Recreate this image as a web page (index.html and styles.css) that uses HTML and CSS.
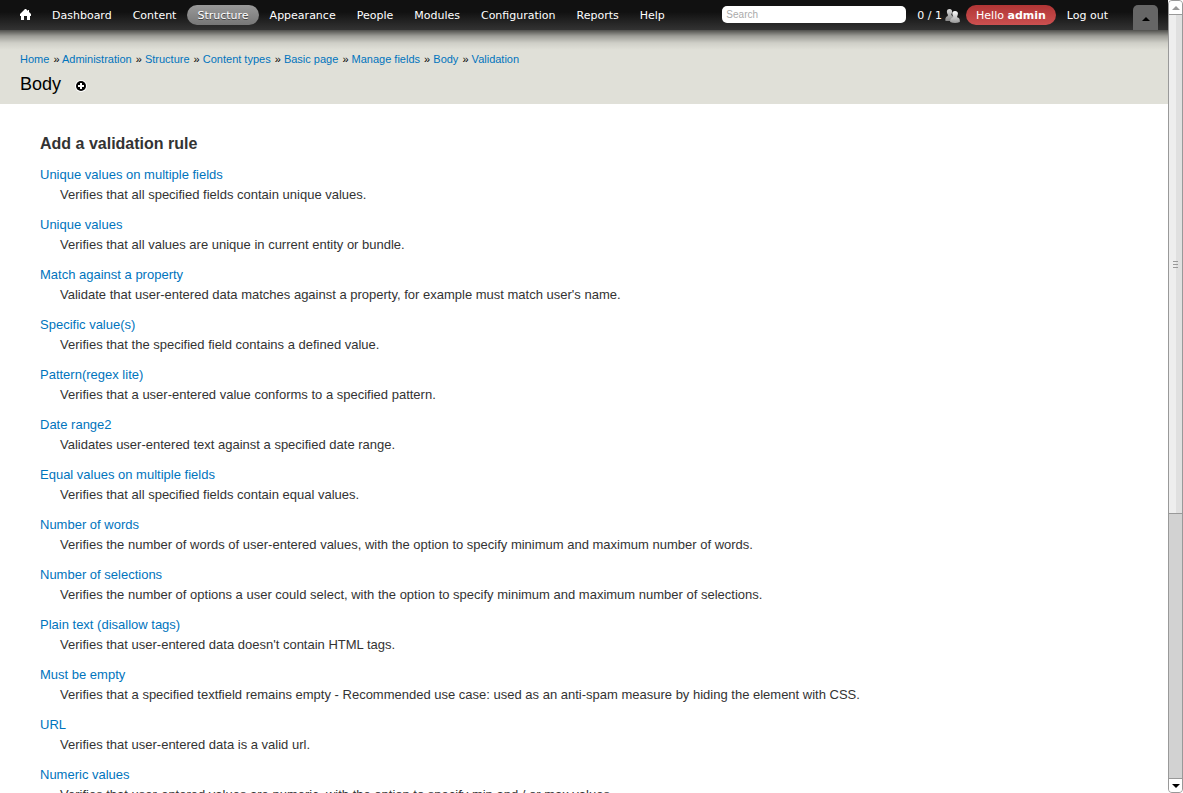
FILE: index.html
```
<!DOCTYPE html>
<html lang="en">
<head>
    <meta charset="UTF-8">
    <meta name="viewport" content="width=device-width, initial-scale=1.0">
    <title>Body | Validation</title>
    <link rel="stylesheet" href="styles.css">
</head>
<body>
    <div class="page">
        <nav class="toolbar">
            <ul class="menu">
                <li><a class="home" href="#" aria-label="Home"><svg width="11" height="11" viewBox="0 0 11 11"><path d="M5 0H6L8 2V1H9V3L11 5V7H10V11H7V7H4V11H1V7H0V5Z" fill="#fff"/></svg></a></li>
                <li><a href="#">Dashboard</a></li>
                <li><a href="#">Content</a></li>
                <li><a class="active" href="#">Structure</a></li>
                <li><a href="#">Appearance</a></li>
                <li><a href="#">People</a></li>
                <li><a href="#">Modules</a></li>
                <li><a href="#">Configuration</a></li>
                <li><a href="#">Reports</a></li>
                <li><a href="#">Help</a></li>
            </ul>
            <div class="user-menu">
                <input class="search" type="text" placeholder="Search" aria-label="Search">
                <a class="users" href="#">0 / 1
                    <svg width="15" height="14" viewBox="0 0 15 14">
                        <defs>
                            <linearGradient id="person" x1="0" y1="0" x2="0" y2="1">
                                <stop offset="0" stop-color="#fff"/>
                                <stop offset="1" stop-color="#999"/>
                            </linearGradient>
                        </defs>
                        <g fill="url(#person)">
                            <path opacity="0.85" d="M4.500 0C6.500 0 7.500 1.500 7 3.500C6.800 4.600 6.300 5.200 6.300 6C7 7 8.500 7 8.500 9V12H0.500C0 9.500 0.500 8 2.800 7V5.500C1.500 3.500 1.300 0 4.500 0Z"/>
                            <path d="M10 2C12.500 2 13.400 3.800 12.700 5.800C12.500 6.800 12.100 7.300 12.100 8.300C14.400 9.200 15 10 14.800 13C12 14.200 8 14.200 5.200 13C5 10.500 5.800 9.500 8.100 8.300V7.300C6.800 5.200 6.800 2 10 2Z"/>
                        </g>
                    </svg>
                </a>
                <a class="hello" href="#">Hello <strong>admin</strong></a>
                <a class="logout" href="#">Log out</a>
                <button class="toggle" type="button" aria-label="Hide shortcuts"><svg width="8" height="4" viewBox="0 0 8 4"><path d="M4 0L8 4H0Z"/></svg></button>
            </div>
        </nav>

        <header class="branding">
            <div class="breadcrumb">
                <a href="#">Home</a> » <a href="#">Administration</a> » <a href="#">Structure</a> » <a href="#">Content types</a> » <a href="#">Basic page</a> » <a href="#">Manage fields</a> » <a href="#">Body</a> » <a href="#">Validation</a>
            </div>
            <div class="title-row">
                <h1>Body</h1>
                <a class="add-shortcut" href="#" aria-label="Add to shortcuts"><svg width="12" height="12" viewBox="0 0 12 12"><circle cx="6" cy="6" r="6" fill="#fff"/><circle cx="6" cy="6" r="5" fill="#000"/><path d="M5 3H7V5H9V7H7V9H5V7H3V5H5Z" fill="#fff"/></svg></a>
            </div>
        </header>

        <main class="content">
            <h3>Add a validation rule</h3>
            <dl class="rules">
                <dt><a href="#">Unique values on multiple fields</a></dt>
                <dd>Verifies that all specified fields contain unique values.</dd>
                <dt><a href="#">Unique values</a></dt>
                <dd>Verifies that all values are unique in current entity or bundle.</dd>
                <dt><a href="#">Match against a property</a></dt>
                <dd>Validate that user-entered data matches against a property, for example must match user's name.</dd>
                <dt><a href="#">Specific value(s)</a></dt>
                <dd>Verifies that the specified field contains a defined value.</dd>
                <dt><a href="#">Pattern(regex lite)</a></dt>
                <dd>Verifies that a user-entered value conforms to a specified pattern.</dd>
                <dt><a href="#">Date range2</a></dt>
                <dd>Validates user-entered text against a specified date range.</dd>
                <dt><a href="#">Equal values on multiple fields</a></dt>
                <dd>Verifies that all specified fields contain equal values.</dd>
                <dt><a href="#">Number of words</a></dt>
                <dd>Verifies the number of words of user-entered values, with the option to specify minimum and maximum number of words.</dd>
                <dt><a href="#">Number of selections</a></dt>
                <dd>Verifies the number of options a user could select, with the option to specify minimum and maximum number of selections.</dd>
                <dt><a href="#">Plain text (disallow tags)</a></dt>
                <dd>Verifies that user-entered data doesn't contain HTML tags.</dd>
                <dt><a href="#">Must be empty</a></dt>
                <dd>Verifies that a specified textfield remains empty - Recommended use case: used as an anti-spam measure by hiding the element with CSS.</dd>
                <dt><a href="#">URL</a></dt>
                <dd>Verifies that user-entered data is a valid url.</dd>
                <dt><a href="#">Numeric values</a></dt>
                <dd>Verifies that user-entered values are numeric, with the option to specify min and / or max values.</dd>
            </dl>
        </main>
    </div>

    <div class="scrollbar" aria-hidden="true">
        <div class="arrow arrow-up"><svg width="8" height="4" viewBox="0 0 8 4"><path d="M4 0L8 4H0Z" fill="#999"/></svg></div>
        <div class="thumb"><span class="grip"></span></div>
        <div class="track"></div>
        <div class="arrow arrow-down"><svg width="8" height="4" viewBox="0 0 8 4"><path d="M0 0H8L4 4Z"/></svg></div>
    </div>
</body>
</html>
```

FILE: styles.css
```
* {
    box-sizing: border-box;
}

body {
    margin: 0;
    display: flex;
    height: 100vh;
    overflow: hidden;
    background: #fff;
    color: #333;
    font-family: "Liberation Sans", Arial, sans-serif;
    font-size: 13px;
    line-height: 20px;
}

a {
    color: #0074bd;
    text-decoration: none;
}

svg {
    display: block;
}

.page {
    flex: 1;
    min-width: 0;
    overflow: hidden;
}

/* toolbar */
.toolbar {
    position: relative;
    display: flex;
    justify-content: space-between;
    height: 30px;
    padding: 0 10px;
    background: linear-gradient(#111 40%, #333);
    font-family: "DejaVu Sans", Verdana, sans-serif;
    font-size: 11px;
    line-height: 18px;
}

/* shadow falling on the header */
.toolbar::after {
    content: "";
    position: absolute;
    top: 100%;
    left: 0;
    right: 0;
    height: 20px;
    background: linear-gradient(rgba(0,0,0,0.65), rgba(0,0,0,0.3) 30%, rgba(0,0,0,0.08) 65%, rgba(0,0,0,0));
    pointer-events: none;
}

.toolbar a {
    display: block;
    height: 20px;
    padding: 2px 10px 0;
    border-radius: 10px;
    color: #fff;
    white-space: nowrap;
}

.menu,
.user-menu {
    display: flex;
    gap: 1px;
    margin: 0;
    padding: 5px 0 0;
    list-style: none;
}

.toolbar .home {
    padding-top: 4px;
}

.toolbar .active {
    background: linear-gradient(#999, #777);
    text-shadow: 0 1px 0 #444;
}

.search {
    width: 184px;
    height: 17px;
    margin-top: 1px;
    padding: 0 4px;
    border: 0;
    border-radius: 5px;
    background: #fff;
    font-family: "Liberation Sans", Arial, sans-serif;
    font-size: 10px;
}

.search::placeholder {
    color: #aaa;
}

.toolbar .users {
    display: flex;
    align-items: center;
    gap: 3px;
    padding-right: 5px;
}

.toolbar .hello {
    background: linear-gradient(#b03535, #cc5050);
}

.toggle {
    display: flex;
    align-items: center;
    justify-content: center;
    width: 25px;
    height: 25px;
    margin-left: 14px;
    padding: 2px 0 0;
    border: 0;
    border-radius: 5px 5px 0 0;
    background: #666;
}

/* header */
.branding {
    padding: 20px 20px 8px;
    background: #e0e0d8;
    color: #000;
}

.breadcrumb {
    font-size: 11px;
    line-height: 18px;
}

.breadcrumb a {
    margin-right: 1px;
}

.title-row {
    display: flex;
    align-items: center;
    gap: 14px;
    padding-top: 4px;
}

h1 {
    margin: 0;
    font-size: 18px;
    font-weight: normal;
    line-height: 24px;
}

.add-shortcut {
    padding-top: 4px;
}

/* content */
.content {
    padding: 30px 40px;
}

h3 {
    margin: 0 0 11px;
    font-size: 16px;
    line-height: 20px;
}

.rules {
    margin: 0;
}

.rules dd {
    margin: 0 0 10px 20px;
}

/* scrollbar */
.scrollbar {
    display: flex;
    flex-direction: column;
    width: 15px;
    border: 1px solid #999;
    border-radius: 4px;
    background: #d2d2d2;
    overflow: hidden;
}

.arrow {
    display: flex;
    align-items: center;
    justify-content: center;
    height: 14px;
    background: #fff;
}

.arrow-up {
    border-bottom: 1px solid #999;
}

.arrow-down {
    border-top: 1px solid #999;
}

.thumb {
    display: flex;
    flex: 499;
    align-items: center;
    justify-content: center;
    border-bottom: 1px solid #999;
    background: linear-gradient(to right, #eee 55%, #e0e0e0 55%);
}

.grip {
    width: 5px;
    height: 7px;
    background: repeating-linear-gradient(#999 0 1px, transparent 1px 3px);
}

.track {
    flex: 264;
}
```
